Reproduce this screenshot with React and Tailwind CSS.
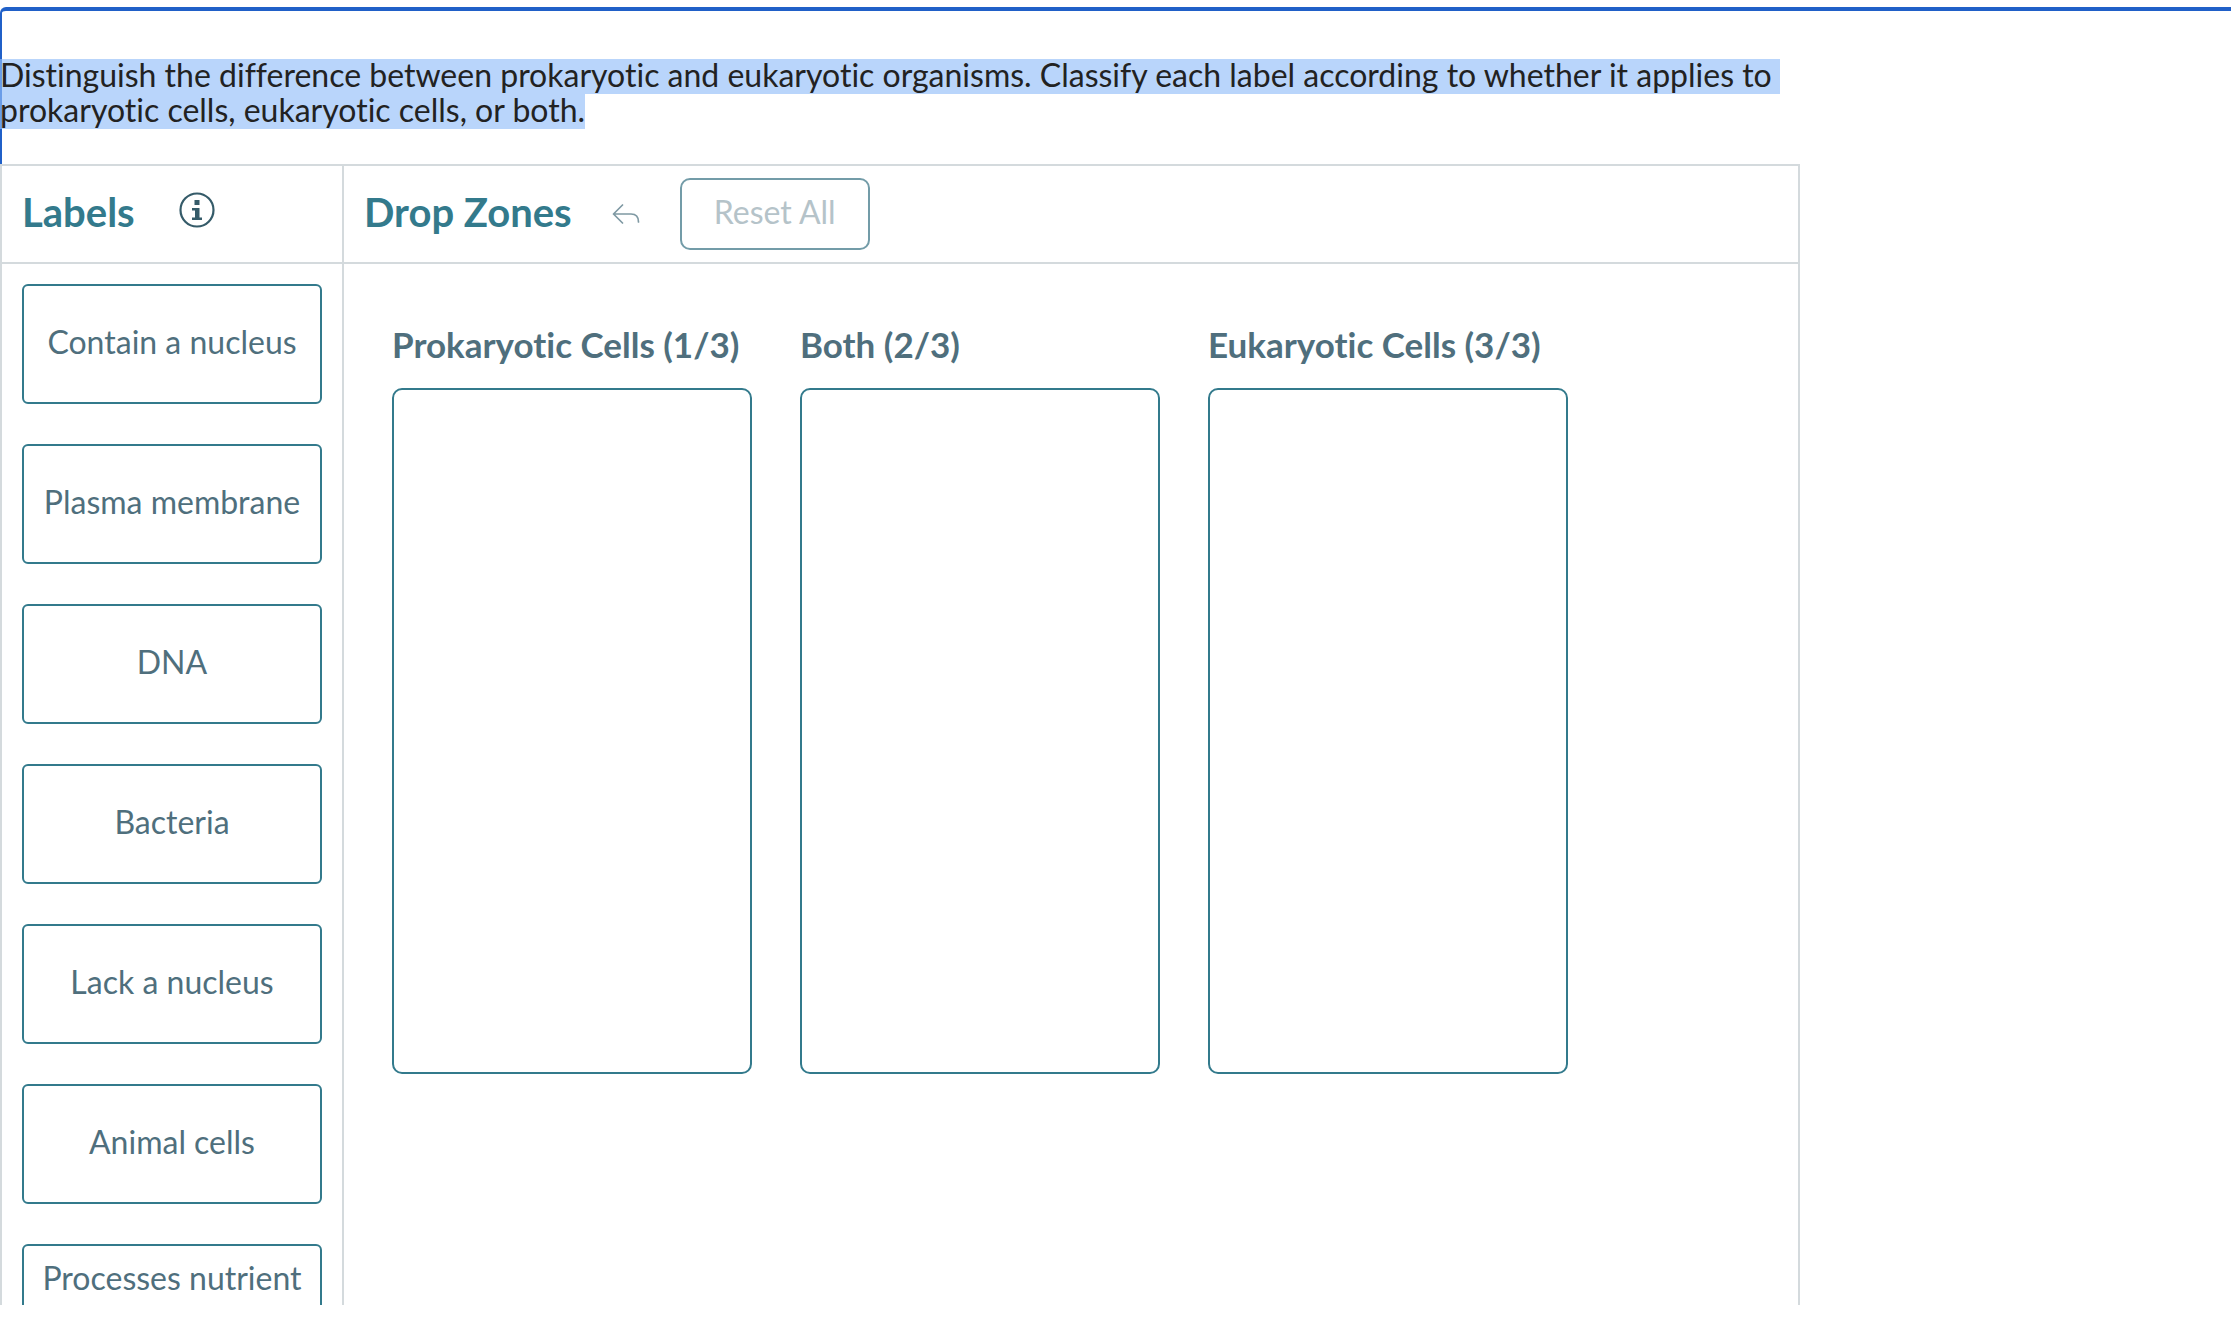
const labels = [
  "Contain a nucleus",
  "Plasma membrane",
  "DNA",
  "Bacteria",
  "Lack a nucleus",
  "Animal cells",
];

const zones = ["Prokaryotic Cells (1/3)", "Both (2/3)", "Eukaryotic Cells (3/3)"];

function InfoIcon() {
  return (
    <svg viewBox="0 0 36 36" className="size-9" fill="none" aria-hidden="true">
      <circle cx="18" cy="18" r="16.5" stroke="#355b69" strokeWidth="2.2" />
      <path d="M15.5 8h5v5h-5zM13 16h7.5v9.5H23V28H13v-2.5h3v-7h-3z" fill="#355b69" />
    </svg>
  );
}

function UndoIcon() {
  return (
    <svg viewBox="0 0 28 20" className="h-5 w-7" fill="none" stroke="#7f99a3" strokeWidth="1.7" strokeLinecap="round" strokeLinejoin="round" aria-hidden="true">
      <path d="M10.5 1L1.5 10L10.5 19M1.5 10H19C24 10 26.5 12.5 26.5 18" />
    </svg>
  );
}

export default function App() {
  return (
    <main className="flex h-screen flex-col overflow-hidden bg-white pt-[7px] pb-9 font-['Lato',sans-serif] text-[32px] [font-variant-ligatures:no-common-ligatures]">
      <header className="rounded-tl-md border-t-4 border-l-2 border-[#2060c8] pt-12 pb-[35px]">
        <p className="-ml-0.5 text-[#222]">
          <span className="block w-fit bg-[#94bff9]/65 pr-2 pb-1 leading-[31px]">
            Distinguish the difference between prokaryotic and eukaryotic organisms. Classify each label according to whether it applies to
          </span>
          <span className="block w-fit bg-[#94bff9]/65 pb-1 leading-[31px]">
            prokaryotic cells, eukaryotic cells, or both.
          </span>
        </p>
      </header>
      <div className="grid min-h-0 w-full max-w-[1800px] flex-1 grid-cols-[342px_1fr] overflow-hidden border-t-2 border-r-2 border-l-2 border-[#d4dadd]">
        <section className="flex flex-col border-r-2 border-[#d4dadd]">
          <div className="flex h-[98px] shrink-0 items-center border-b-2 border-[#d4dadd] px-5 pb-1">
            <h2 className="text-[40px] font-bold text-[#337a8c]">Labels</h2>
            <button type="button" aria-label="Label information" className="mb-1 ml-11">
              <InfoIcon />
            </button>
          </div>
          <div className="flex flex-col gap-10 p-5 text-[#4f6f7d]">
            {labels.map((label) => (
              <button key={label} type="button" className="h-[120px] shrink-0 rounded-md border-2 border-[#337a8c] pb-1 whitespace-nowrap">
                {label}
              </button>
            ))}
            <button type="button" className="flex h-[120px] shrink-0 justify-center rounded-md border-2 border-[#337a8c] pt-2 leading-[48px] whitespace-nowrap">
              Processes nutrient
            </button>
          </div>
        </section>
        <section className="flex flex-col">
          <div className="flex h-[98px] shrink-0 items-center border-b-2 border-[#d4dadd] px-5">
            <h2 className="pb-1 text-[40px] font-bold text-[#337a8c]">Drop Zones</h2>
            <button type="button" aria-label="Undo" className="mx-10">
              <UndoIcon />
            </button>
            <button type="button" disabled className="h-[72px] w-[190px] rounded-[10px] border-2 border-[#739ca8] pb-1 text-[#b5c3c9]">
              Reset All
            </button>
          </div>
          <div className="flex gap-12 px-12 pt-14">
            {zones.map((zone) => (
              <div key={zone} className="w-[360px]">
                <h3 className="mb-5 text-[35px] leading-12 font-bold whitespace-nowrap text-[#4f6f7d]">{zone}</h3>
                <div className="h-[686px] rounded-[10px] border-2 border-[#337a8c]" />
              </div>
            ))}
          </div>
        </section>
      </div>
    </main>
  );
}
